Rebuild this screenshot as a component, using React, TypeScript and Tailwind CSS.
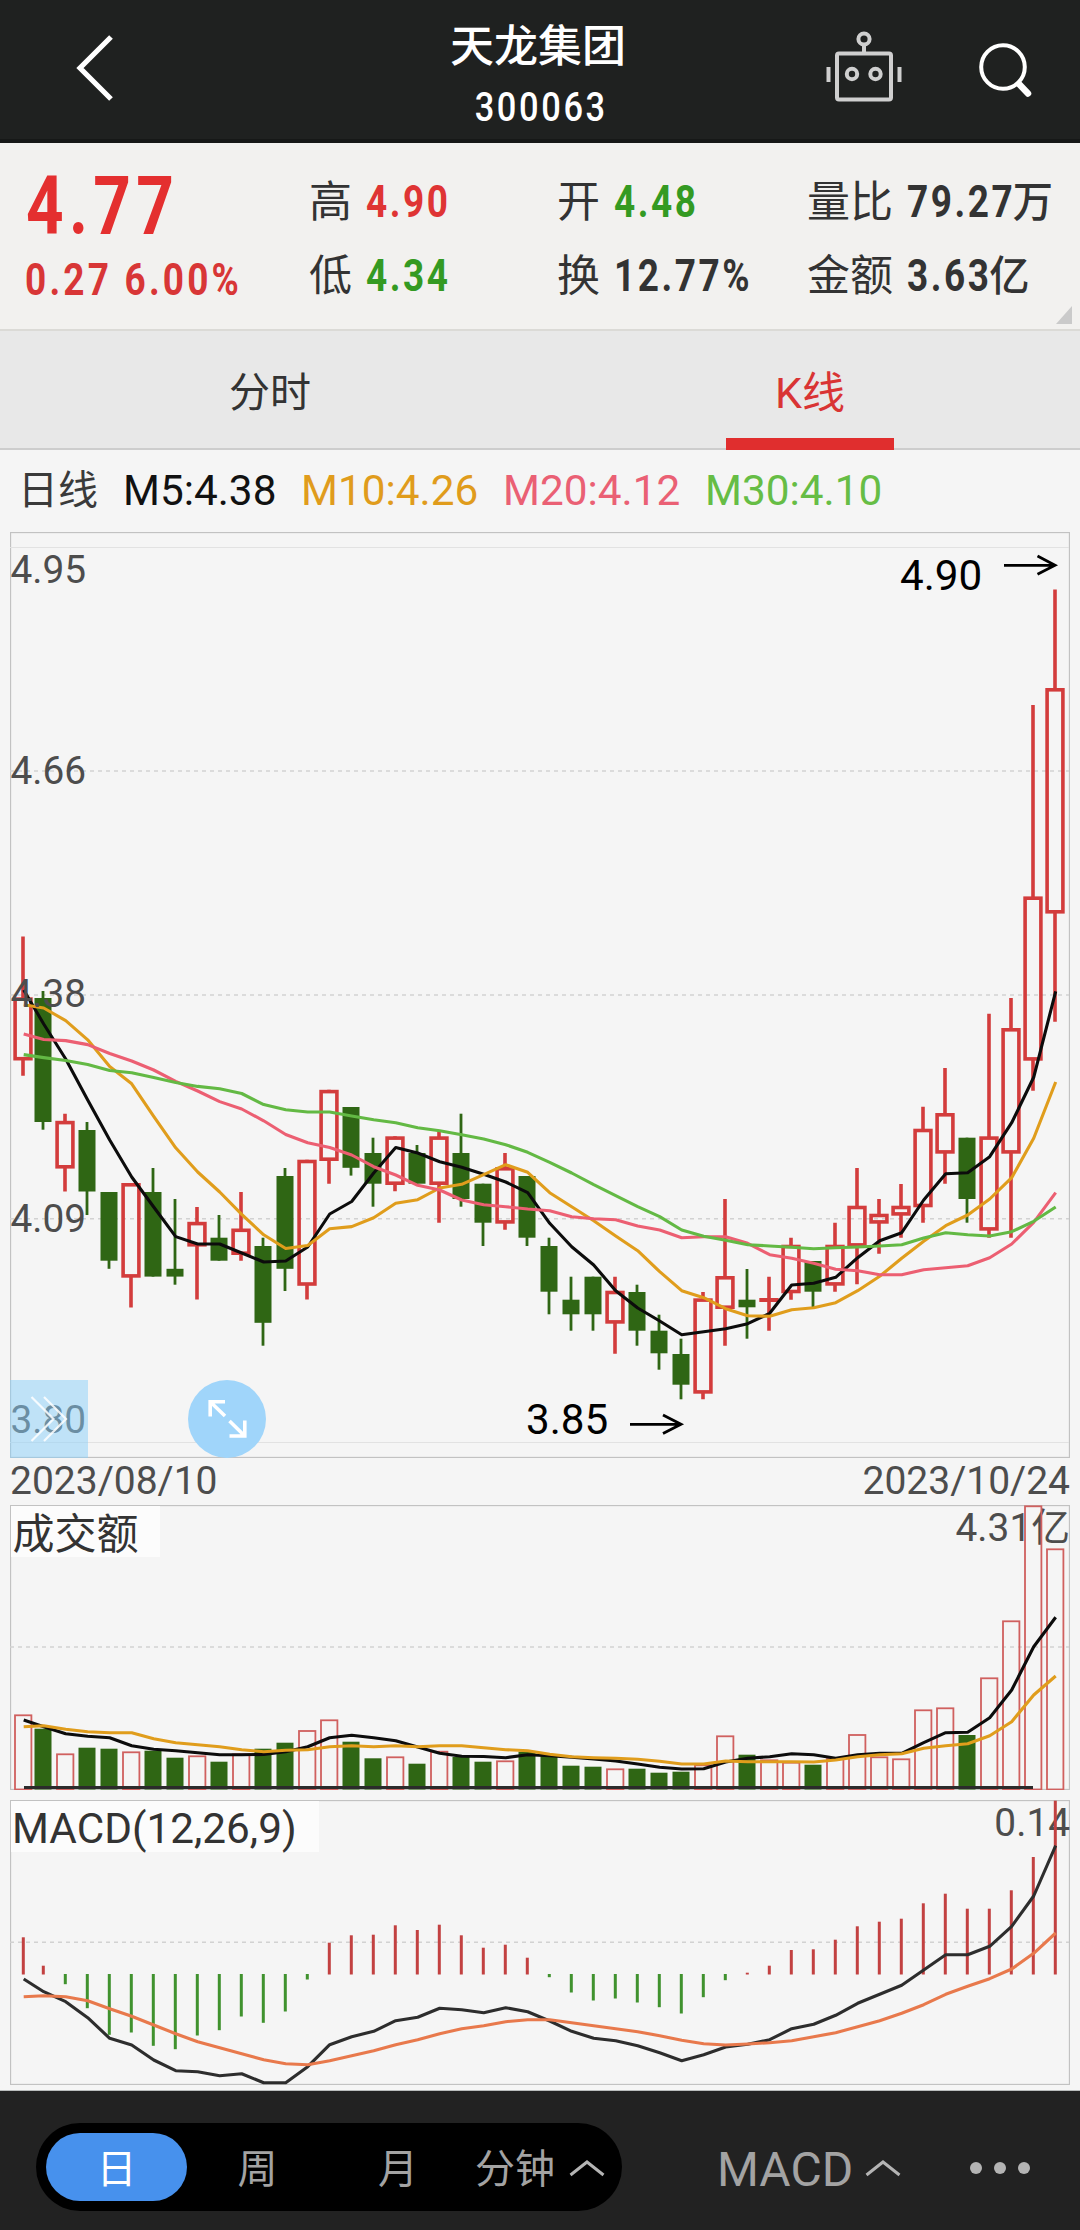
import React from 'react';

const RED = '#d33c3c';
const GREEN = '#2f6614';

// the first slot is two pixels narrower than the others
const barX = (i: number) => (i === 0 ? 23 : 43 + 22 * (i - 1));

// [up, high, body top, body bottom, low]
const CANDLES: [number, number, number, number, number][] = [
  [1, 936.6, 997.3, 1060.5, 1075.7], [0, 991, 998, 1122, 1129.7], [1, 1113.8, 1120.8, 1168.6, 1191.5],
  [0, 1122, 1130, 1191.5, 1215], [0, 1192, 1192, 1260.7, 1268.8], [1, 1183, 1183, 1277.7, 1307.6],
  [0, 1168, 1192, 1276.6, 1276.6], [0, 1199, 1268.8, 1276.6, 1284.7], [1, 1207, 1221.8, 1246.6, 1299.5],
  [0, 1215, 1237.7, 1260.7, 1260.7], [1, 1192, 1228.5, 1255, 1260.7], [0, 1237.7, 1246, 1322.8, 1345.7],
  [0, 1168, 1176, 1268.8, 1291], [1, 1159.7, 1159.7, 1285.8, 1299.5], [1, 1089.8, 1089.8, 1161, 1183.7],
  [0, 1107, 1107, 1167.8, 1175.6], [0, 1137.7, 1153, 1183.7, 1206.7], [1, 1136.3, 1136.3, 1185, 1191.3],
  [0, 1145, 1153, 1183.7, 1183.7], [1, 1131.7, 1136.3, 1185, 1222.7], [0, 1113.7, 1153, 1199, 1206.7],
  [0, 1183.7, 1183.7, 1222.7, 1246], [1, 1153, 1167, 1223.7, 1229.7], [0, 1176, 1176, 1237.7, 1246],
  [0, 1237.7, 1246, 1291.7, 1314.3], [0, 1276.7, 1299.7, 1314.3, 1330.7], [0, 1276.7, 1276.7, 1314.3, 1330.7],
  [1, 1276.7, 1290.7, 1323.7, 1353.7], [0, 1284.7, 1292, 1330.7, 1345.7], [0, 1314.7, 1330.7, 1353.3, 1369.7],
  [0, 1338.7, 1354, 1384.7, 1399.3], [1, 1292, 1298.3, 1393.7, 1399.3], [1, 1199, 1276, 1309, 1345.7],
  [0, 1269, 1299.7, 1307.3, 1338.7], [1, 1276.7, 1298, 1302, 1330.7], [1, 1237.7, 1244.7, 1293.3, 1299.7],
  [0, 1261, 1261, 1291.7, 1307], [1, 1222.7, 1244.7, 1285.7, 1291.7], [1, 1168, 1205.7, 1246.7, 1284.3],
  [1, 1199, 1213.7, 1223.7, 1253.7], [1, 1184, 1205.7, 1215.7, 1237.7], [1, 1106.7, 1128.7, 1207.3, 1222.7],
  [1, 1068, 1113, 1153.7, 1183.7], [0, 1137.7, 1137.7, 1199, 1222.7], [1, 1013.7, 1136.3, 1230.7, 1237.7],
  [1, 998, 1028, 1153.7, 1237.7], [1, 705, 896.4, 1060.7, 1090.7], [1, 589.6, 688, 913.6, 1021.8],
];

const M5 = [
  990, 1024, 1059, 1100, 1140, 1177, 1207, 1236.6, 1244, 1244, 1253, 1262, 1261, 1247, 1214, 1201.5,
  1173, 1147.5, 1153, 1161.7, 1167.3, 1174.3, 1182, 1192.7, 1223.3, 1246.7, 1265, 1290.7, 1308, 1321, 1334.7, 1331.7,
  1328.7, 1323.7, 1313.3, 1285, 1283.3, 1277.3, 1257.7, 1240.7, 1232.7, 1200, 1173.7, 1172.7, 1156.7, 1122.7, 1077.3, 991.4,
];
const M10 = [
  1004.7, 1008, 1020.6, 1039.8, 1066.5, 1083.8, 1116.4, 1147.8, 1172, 1192, 1214.4, 1234.8, 1248.5, 1245.5, 1228.8, 1226.6,
  1217.7, 1203.3, 1199.7, 1188, 1184.3, 1174.7, 1164.7, 1172.3, 1192.7, 1206.7, 1220.7, 1236, 1250.7, 1271.7, 1290.7, 1297.7,
  1308.7, 1315.7, 1316.3, 1309.7, 1307.7, 1302.7, 1290.7, 1276.3, 1258.3, 1241.3, 1225.7, 1215, 1199, 1177.7, 1138.3, 1082,
];
const M20 = [
  1034, 1039.5, 1040.6, 1044.6, 1053.5, 1061, 1070, 1081.3, 1091, 1101.6, 1109, 1120.8, 1134.5, 1142.7, 1147.5, 1155,
  1166.7, 1175, 1185.3, 1190, 1200, 1204.7, 1206.7, 1209, 1210.7, 1216.7, 1218.7, 1219.7, 1226, 1230, 1237.7, 1236.7,
  1236.7, 1243.3, 1254.7, 1258.3, 1263.3, 1269.3, 1270.7, 1274.7, 1274.7, 1269.7, 1267.7, 1265.7, 1257.7, 1244, 1222.3, 1192.7,
];
const M30 = [
  1054.6, 1057.6, 1060.5, 1064.6, 1070.5, 1072.7, 1077.6, 1082.4, 1086.4, 1088.7, 1093.5, 1104.6, 1109.7, 1112, 1112, 1116,
  1119.7, 1122.7, 1127.7, 1130.7, 1134.7, 1139, 1144.7, 1152.3, 1162.3, 1173, 1184.7, 1195.7, 1206.7, 1216.7, 1230, 1236.3,
  1240.3, 1244.7, 1246, 1247.3, 1248.7, 1247.7, 1247, 1246, 1244.7, 1238, 1232.7, 1234.7, 1236, 1231.7, 1221.3, 1207,
];

const VOLUME = [
  1714.3, 1728.7, 1753.3, 1747.7, 1748.7, 1751.3, 1750.7, 1757.7, 1755.3, 1761.7, 1753.3, 1748.7, 1742.7, 1730, 1719.3, 1741.7,
  1758.3, 1756.3, 1763.7, 1750.7, 1757, 1761.7, 1760.3, 1751.7, 1756, 1765.7, 1766.7, 1768.3, 1768.7, 1772.7, 1771.7, 1764.3,
  1735.3, 1754.7, 1759.3, 1761.7, 1764.7, 1758, 1734, 1756.3, 1758.3, 1709.3, 1707.3, 1735, 1677.3, 1620.3, 1505.3, 1548.3,
];
const VOL5 = [
  1720, 1726.7, 1733.7, 1736.3, 1737.7, 1745.7, 1749.3, 1750.7, 1752.7, 1754.7, 1754.7, 1754.5, 1751.7, 1746.7, 1737.7, 1735.3,
  1737.7, 1740.7, 1747, 1753.3, 1756.3, 1756.5, 1757.7, 1754.7, 1755.7, 1757.3, 1759, 1761, 1764, 1767.3, 1769, 1768.7,
  1762, 1758.3, 1756.7, 1753.7, 1754.7, 1758.3, 1754.7, 1753.3, 1753.3, 1742.7, 1732.7, 1732.3, 1717.7, 1690, 1646.7, 1617.3,
];
const VOL10 = [
  1726.7, 1725.7, 1729.3, 1731.7, 1732.7, 1732.7, 1738.7, 1742.7, 1744.7, 1746.7, 1749.7, 1751.7, 1750.3, 1749.7, 1746.7, 1745.7,
  1746.7, 1745.7, 1746.7, 1745.7, 1745.7, 1747.7, 1749.7, 1750.7, 1754.3, 1756.7, 1757.7, 1758.3, 1759.3, 1761.3, 1764, 1764,
  1761, 1761.7, 1761.7, 1761.7, 1762, 1760, 1756.7, 1754.7, 1753.7, 1748.3, 1745.7, 1743.7, 1735.7, 1721.7, 1695, 1676,
];

const MACD_ZERO = 1974;
const MACD = [
  1937.3, 1965.7, 1983.7, 2007.7, 2034.3, 2032, 2045.3, 2048.7, 2035, 2029.7, 2016, 2022.3, 2011, 1979, 1942.7, 1935.3,
  1934.7, 1925.3, 1930, 1924.7, 1935.3, 1947.7, 1944.7, 1957.7, 1976.7, 1992, 2000, 1998, 2002, 2006.7, 2013, 1996.7,
  1979.7, 1972.7, 1965.7, 1950, 1949.3, 1939.7, 1926.3, 1921.7, 1918.7, 1903.3, 1893.7, 1908.7, 1908.7, 1890.3, 1857, 1800.7,
];
const DIF = [
  1979, 1991.7, 2001.7, 2017.7, 2038.3, 2045, 2060, 2070.7, 2071.7, 2075.7, 2073.7, 2082.7, 2082.7, 2066.7, 2044.7, 2036.7,
  2031.3, 2020.7, 2017.3, 2008.3, 2009.7, 2012.7, 2007.7, 2011.7, 2021, 2031.3, 2038.3, 2040.7, 2045.7, 2052.7, 2060.7, 2054.7,
  2047, 2044.3, 2039.7, 2028.7, 2024.3, 2015.3, 2003.3, 1994.3, 1985.3, 1970, 1954.7, 1954.7, 1946.3, 1926.3, 1896, 1845.7,
];
const DEA = [
  1996.7, 1995.7, 1996.7, 2000.7, 2008.7, 2016.3, 2025, 2033.7, 2041.7, 2047.7, 2053.7, 2059.7, 2063.7, 2064.7, 2060.7, 2055.7,
  2050.7, 2044.7, 2039.7, 2033.7, 2028.7, 2025.7, 2021.7, 2019.7, 2019.7, 2022.7, 2025.7, 2028.7, 2031.7, 2035.7, 2040.3, 2043.7,
  2045, 2044, 2042.7, 2040.7, 2036.7, 2032.7, 2026.7, 2020.7, 2013.3, 2004.7, 1994.3, 1986.3, 1978.7, 1969, 1953.3, 1933,
];

const Line: React.FC<{ data: number[]; color: string }> = ({ data, color }) => (
  <polyline
    points={data.map((y, i) => `${barX(i) + 0.7},${y}`).join(' ')}
    fill="none"
    stroke={color}
    strokeWidth={3.1}
    strokeLinejoin="round"
  />
);

const Frame: React.FC<{ y: number; h: number }> = ({ y, h }) => (
  <rect x={10.5} y={y + 0.5} width={1059} height={h - 1} fill="none" stroke="#c2c2c2" strokeWidth={1.3} />
);

const Dashes: React.FC<{ y: number }> = ({ y }) => (
  <line x1={10} x2={1069} y1={y} y2={y} stroke="#d2d2d2" strokeWidth={1.4} strokeDasharray="4 4" />
);

const Label: React.FC<{ x: number; y: number; end?: boolean; children: React.ReactNode }> = ({ x, y, end, children }) => (
  <text x={x} y={y} textAnchor={end ? 'end' : 'start'} fontSize={38.8} fill="#4d4d4d">
    {children}
  </text>
);

const PriceChart = () => (
  <svg viewBox="10 532 1060 926" className="block h-[926px] w-[1060px]">
    <Frame y={532} h={926} />
    <path d="M10 547.5H1069M10 1442.5H1069" stroke="#e2e2e2" strokeWidth={1} />
    <Dashes y={771} />
    <Dashes y={995} />
    <Dashes y={1218.7} />
    {CANDLES.map(([up, high, top, bottom, low], i) => {
      const x = barX(i);
      return up ? (
        <g key={i} stroke={RED} strokeWidth={3.6} fill="none">
          <path d={`M${x} ${high}V${top + 1}M${x} ${bottom - 1}V${low}`} />
          <rect x={x - 7.9} y={top + 1.8} width={15.8} height={Math.max(bottom - top - 3.6, 0.4)} />
        </g>
      ) : (
        <g key={i} fill={GREEN}>
          <rect x={x - 1.4} y={high} width={2.8} height={low - high} />
          <rect x={x - 8.5} y={top} width={17} height={bottom - top} />
        </g>
      );
    })}
    <Line data={M5} color="#0c0c0c" />
    <Line data={M10} color="#e09d1c" />
    <Line data={M20} color="#ec5f72" />
    <Line data={M30} color="#63b944" />
    <Label x={10.5} y={582.5}>4.95</Label>
    <Label x={10.5} y={783.5}>4.66</Label>
    <Label x={10.5} y={1007.3}>4.38</Label>
    <Label x={10.5} y={1231.5}>4.09</Label>
    <Label x={10.5} y={1432.5}>3.80</Label>
    <g fontSize={42.2} fill="#000">
      <text x={900} y={590}>4.90</text>
      <text x={526} y={1433.7}>3.85</text>
    </g>
    <g fill="none" stroke="#000" strokeWidth={2.8}>
      <path d="M1004 565.3H1055M1037.5 556L1055 565.3L1037.5 574.3" />
      <path d="M630 1424.3H681M663 1415L681 1424.3L663 1433.5" />
    </g>
  </svg>
);

const VolumeChart = () => (
  <svg viewBox="10 1505 1060 285" className="block h-[285px] w-[1060px]">
    <Frame y={1505} h={285} />
    <rect x={11} y={1506} width={149} height={51} fill="#fcfcfc" />
    <Dashes y={1647} />
    <text x={12.5} y={1549} fontSize={42} fill="#333">成交额</text>
    <Label x={1070} y={1540.7} end>4.31亿</Label>
    {VOLUME.map((y, i) =>
      CANDLES[i][0] ? (
        <rect key={i} x={barX(i) - 8} y={y + 1} width={16.4} height={1788.5 - y} fill="none" stroke="#d0605f" strokeWidth={1.8} />
      ) : (
        <rect key={i} x={barX(i) - 8.5} y={y} width={17} height={1789.5 - y} fill={GREEN} />
      ),
    )}
    <path d="M24 1787.5H1033" stroke="#2b2b2b" strokeWidth={3} />
    <Line data={VOL5} color="#0c0c0c" />
    <Line data={VOL10} color="#e09d1c" />
  </svg>
);

const MacdChart = () => (
  <svg viewBox="10 1800 1060 285" className="block h-[285px] w-[1060px]">
    <Frame y={1800} h={285} />
    <rect x={11} y={1801} width={308} height={51} fill="#fcfcfc" />
    <Dashes y={1942.3} />
    <text x={12} y={1842.5} fontSize={42.3} fill="#333">MACD(12,26,9)</text>
    <Label x={1070} y={1836} end>0.14</Label>
    {MACD.map((y, i) => (
      <rect
        key={i}
        x={barX(i) - 1.2}
        y={Math.min(y, MACD_ZERO)}
        width={3}
        height={Math.abs(y - MACD_ZERO) + 0.5}
        fill={y < MACD_ZERO ? '#c24141' : '#40922e'}
      />
    ))}
    <Line data={DIF} color="#2d2d2d" />
    <Line data={DEA} color="#e8794c" />
  </svg>
);

const Header = () => (
  <header className="flex h-[143px] items-center justify-between border-b-4 border-[#161817] bg-[#1f2120] pr-[46px] pl-[74px]">
    <svg viewBox="0 1 42 70" className="h-[70px] w-[42px]" fill="none" stroke="#fff" strokeWidth={5.2}>
      <path d="M37 3L6 34L37 65" />
    </svg>
    <div className="relative left-[68px] flex flex-col items-center text-white">
      <h1 className="h-[61px] pt-[3px] text-[44px] leading-[60px] font-medium">天龙集团</h1>
      <div className="ml-[6px] h-[51px] scale-x-[0.84] text-[41px] leading-[65px] font-medium tracking-[3.1px]">300063</div>
    </div>
    <div className="flex items-center">
      <svg viewBox="824 30 80 78" className="h-[78px] w-[80px]" fill="none" stroke="#cfcfcf" strokeWidth={4}>
        <circle cx={864} cy={38} r={5.6} />
        <path d="M864 43V52M828.5 66V81M899.5 66V81" />
        <rect x={837} y={52.5} width={54} height={46} rx={2} />
        <circle cx={852} cy={73} r={5.2} />
        <circle cx={875.5} cy={73} r={5.2} />
      </svg>
      <svg viewBox="976 38 58 64" className="ml-[72px] h-[64px] w-[58px]" fill="none" stroke="#fff" strokeLinecap="round">
        <circle cx={1003} cy={67} r={21.8} strokeWidth={4} />
        <path d="M1019 84L1028 93.5" strokeWidth={6.5} />
      </svg>
    </div>
  </header>
);

const Stat: React.FC<{ label: string; value: string; unit?: string; color?: string }> = ({ label, value, unit, color = 'text-[#333]' }) => (
  <div className="flex h-[74px] items-center whitespace-nowrap">
    <span className="text-[43px] leading-[77px] text-[#333]">{label}</span>
    <span className={`ml-[14px] inline-block origin-left scale-x-[0.84] text-[44px] leading-[77px] font-bold tracking-[3px] ${color}`}>
      {value}
      {unit && <span className="-ml-[3px] inline-block origin-left scale-x-[1.14] text-[42px] font-medium">{unit}</span>}
    </span>
  </div>
);

const Quote = () => (
  <section className="relative grid h-[188px] grid-cols-[284px_248px_250px_248px] border-b-2 border-[#dbdad6] bg-[#f2f1ef] pt-[22px] pl-[25px]">
    <div className="whitespace-nowrap text-[#e42f2f]">
      <div className="ml-px h-[78px] origin-left scale-x-[0.8] text-[82px] leading-[83px] font-bold tracking-[6.6px]">4.77</div>
      <div className="h-[74px] origin-left scale-x-[0.84] text-[44px] leading-[74px] font-bold tracking-[3.8px] text-[#d83636]">0.27 6.00%</div>
    </div>
    <div>
      <Stat label="高" value="4.90" color="text-[#df3434]" />
      <Stat label="低" value="4.34" color="text-[#349a22]" />
    </div>
    <div>
      <Stat label="开" value="4.48" color="text-[#349a22]" />
      <Stat label="换" value="12.77%" />
    </div>
    <div>
      <Stat label="量比" value="79.27" unit="万" />
      <Stat label="金额" value="3.63" unit="亿" />
    </div>
    <svg viewBox="0 0 16 18" className="absolute right-[8px] bottom-[5px] h-[18px] w-[16px]">
      <path d="M16 0V18H0Z" fill="#cacaca" />
    </svg>
  </section>
);

const Caret = () => (
  <svg viewBox="0 0 36 18" className="relative top-px h-[18px] w-[36px]" fill="none" stroke="#b4b4b4" strokeWidth={3}>
    <path d="M1.5 16L18 3L34.5 16" />
  </svg>
);

export default function App() {
  return (
    <div className="h-[2230px] w-[1080px] overflow-hidden bg-[#f5f5f5] font-[Roboto,'Noto_Sans_CJK_SC',sans-serif]">
      <Header />
      <Quote />

      <nav className="grid h-[119px] grid-cols-2 border-b-2 border-[#cdcdcd] bg-[#e8e8e8] text-center text-[41px] leading-[125px]">
        <div className="text-[#333]">分时</div>
        <div className="relative text-[43px] text-[#d93434]">
          K线
          <div className="absolute top-[107px] left-[186px] h-[12px] w-[168px] bg-[#e02e2e]" />
        </div>
      </nav>

      <div className="flex h-[82px] pl-[18px] text-[42.3px] leading-[81px] whitespace-nowrap">
        <span className="w-[105px] text-[40px] text-[#3a3a3a]">日线</span>
        <span className="w-[178px] text-[#111]">M5:4.38</span>
        <span className="w-[202px] text-[#e09c1c]">M10:4.26</span>
        <span className="w-[202px] text-[#ea6074]">M20:4.12</span>
        <span className="text-[#66bd45]">M30:4.10</span>
      </div>

      <main className="px-[10px]">
        <div className="relative">
          <PriceChart />
          <button className="absolute bottom-0 left-0 h-[78px] w-[78px] bg-[#8acffa]/50">
            <svg viewBox="10 1380 78 78" className="size-[78px]" fill="none" stroke="#fff" strokeOpacity={0.85} strokeWidth={2.2}>
              <path d="M31.5 1397L53.5 1419L31.5 1441M44 1397L66 1419L44 1441" />
            </svg>
          </button>
          <button className="absolute bottom-0 left-[178px] size-[78px] rounded-full bg-[#a0d5fa]">
            <svg viewBox="188 1380 78 78" className="size-[78px]" fill="none" stroke="#fff" strokeWidth={3.6}>
              <path d="M225 1401.8H210.2V1416.5M210.2 1401.8L225 1416" />
              <path d="M229.5 1421L244.8 1436M229.5 1436H244.8V1420.5" />
            </svg>
          </button>
        </div>
        <div className="flex h-[47px] justify-between text-[39px] leading-[46px] text-[#4d4d4d]">
          <span>2023/08/10</span>
          <span>2023/10/24</span>
        </div>
        <VolumeChart />
        <div className="mt-[10px]">
          <MacdChart />
        </div>
      </main>

      <footer className="mt-[5px] flex h-[140px] items-center border-t border-[#b9bcbc] bg-[#222] pt-[13px] pl-[36px] text-[40px] text-[#a3a3a3]">
        <div className="flex h-[88px] w-[586px] items-center rounded-full bg-black pl-[10px] text-center leading-[73px]">
          <div className="h-[68px] w-[141px] rounded-full bg-[#4791ed] text-white">日</div>
          <div className="h-[68px] w-[141px]">周</div>
          <div className="h-[68px] w-[140px]">月</div>
          <div className="ml-[7px] h-[68px]">分钟</div>
          <div className="ml-[14px] flex"><Caret /></div>
        </div>
        <div className="ml-[95px] h-[68px] text-[48px] leading-[73px]">MACD</div>
        <div className="ml-[12px] flex"><Caret /></div>
        <div className="relative top-px ml-[69px] flex gap-[12px]">
          <i className="size-[12px] rounded-full bg-[#b4b4b4]" />
          <i className="size-[12px] rounded-full bg-[#b4b4b4]" />
          <i className="size-[12px] rounded-full bg-[#b4b4b4]" />
        </div>
      </footer>
    </div>
  );
}
